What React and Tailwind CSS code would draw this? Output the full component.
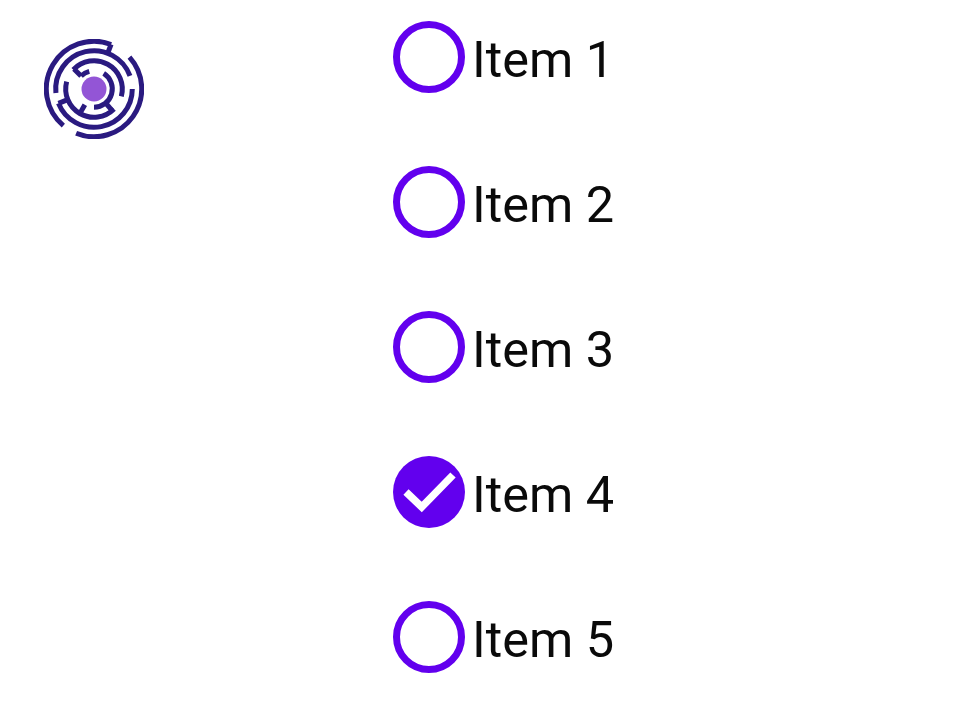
const items = [
  { label: 'Item 1', checked: false },
  { label: 'Item 2', checked: false },
  { label: 'Item 3', checked: false },
  { label: 'Item 4', checked: true },
  { label: 'Item 5', checked: false },
]

// point on a ring, angle in degrees clockwise from 12 o'clock
const pt = (r, deg) => {
  const a = (deg * Math.PI) / 180
  return [50 + r * Math.sin(a), 50 - r * Math.cos(a)]
}

const arc = (r, from, to) => {
  const [x1, y1] = pt(r, from)
  const [x2, y2] = pt(r, to)
  return `M${x1} ${y1}A${r} ${r} 0 ${to - from > 180 ? 1 : 0} 1 ${x2} ${y2}`
}

const spoke = (r1, r2, deg) => {
  const [x1, y1] = pt(r1, deg)
  const [x2, y2] = pt(r2, deg)
  return `M${x1} ${y1}L${x2} ${y2}`
}

const mazePaths = [
  arc(47.7, 220, 381),
  arc(47.7, 48, 202),
  spoke(47.7, 38.3, 21),
  arc(38.3, 264, 430),
  arc(38.3, 90, 248),
  spoke(38.3, 28.3, 248),
  arc(28.3, 135, 285),
  arc(28.3, 313, 465),
  spoke(28.3, 18.3, 210),
  spoke(28.3, 18.3, 315),
  arc(18.3, 315, 345),
  arc(18.3, 32, 180),
  spoke(28.3, 18.3, 140),
]

const MazeLogo = () => (
  <svg width="100" height="100" viewBox="0 0 100 100" fill="none" stroke="#2a1a80" strokeWidth="5">
    {mazePaths.map((d) => (
      <path key={d} d={d} />
    ))}
    <circle cx="50" cy="50" r="12.5" fill="#9355d6" stroke="none" />
  </svg>
)

const RadioMark = ({ checked }) => {
  if (checked) {
    return (
      <svg width="72" height="72" viewBox="0 0 72 72" className="shrink-0">
        <circle cx="36" cy="36" r="36" fill="#6200ee" />
        <path d="M13 36L28.7 51L60 19" fill="none" stroke="#fff" strokeWidth="7.5" />
      </svg>
    )
  }
  return <div className="w-[72px] h-[72px] shrink-0 rounded-full border-[7px] border-[#6200ee]" />
}

const App = () => {
  return (
    <div className="w-[960px] h-[720px] bg-white flex overflow-hidden font-['Roboto',sans-serif]">
      <div className="w-[393px] shrink-0 pl-[44px] pt-[39px]">
        <MazeLogo />
      </div>
      <div className="flex flex-col gap-[73px] pt-[21px]">
        {items.map((item) => (
          <div key={item.label} className="flex items-center gap-[7px] h-[72px]">
            <RadioMark checked={item.checked} />
            <span className="text-[50.5px] leading-none text-[#0a0a0a] pt-[6px]">{item.label}</span>
          </div>
        ))}
      </div>
    </div>
  )
}

export default App
